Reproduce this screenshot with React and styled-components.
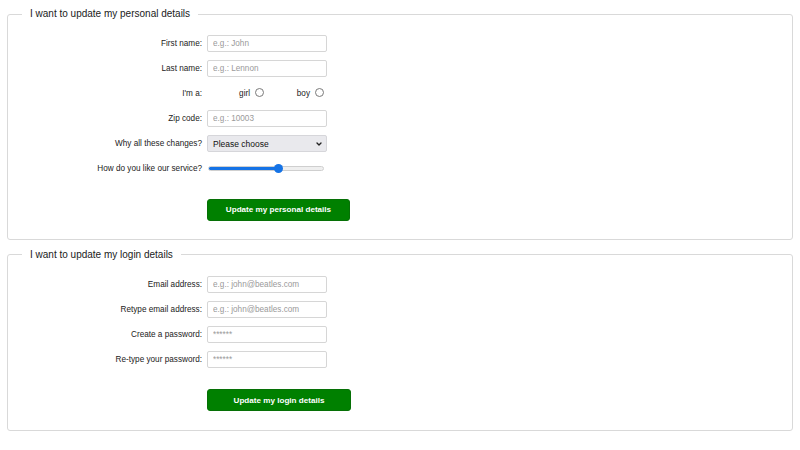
import React from 'react';
import styled, {createGlobalStyle} from "styled-components";
import {ChevronDown} from "lucide-react";

const GlobalStyle = createGlobalStyle`
  * {
    box-sizing: border-box;
  }

  body {
    margin: 0;
    padding: 8px 7px;
    background: #fff;
    font-family: "Liberation Sans", Arial, sans-serif;
    color: #222;
  }
`

const Fieldset = styled.fieldset`
  margin: 0 0 9px;
  padding: 15px 14px ${props => props.bottom}px;
  border: 1px solid #d9d9d9;
  border-radius: 3px;
  min-width: 0;
`

const Legend = styled.legend`
  padding: 0 8px;
  font-size: 10px;
  line-height: 12px;
  color: #1a1a1a;
`

const Row = styled.div`
  display: flex;
  align-items: center;
  height: 17px;
  margin-bottom: 8px;
`

const Label = styled.label`
  width: 185px;
  flex: none;
  padding-right: 5px;
  text-align: right;
  font-size: 8.2px;
  color: #222;
`

const TextInput = styled.input`
  width: 120px;
  height: 17px;
  padding: 0 5px;
  border: 1px solid #d6d6d6;
  border-radius: 2px;
  font-family: inherit;
  font-size: 8.2px;
  color: #222;
  outline: none;

  &::placeholder {
    color: #9a9a9a;
  }
`

const Options = styled.div`
  display: flex;
  width: 120px;
`

const Option = styled.label`
  width: 60px;
  display: flex;
  align-items: center;
  justify-content: flex-end;
  font-size: 8.2px;
  color: #222;

  > input {
    -webkit-appearance: none;
    appearance: none;
    width: 9px;
    height: 9px;
    margin: 0 3px 2px 5px;
    border: 1px solid #7a7a7a;
    border-radius: 50%;
    background: #fff;
  }
`

const SelectBox = styled.div`
  position: relative;
  width: 120px;
  height: 17px;

  > svg {
    position: absolute;
    right: 4px;
    top: 5px;
    pointer-events: none;
    color: #222;
  }
`

const Select = styled.select`
  -webkit-appearance: none;
  appearance: none;
  display: block;
  width: 100%;
  height: 100%;
  padding: 0 5px;
  font-family: inherit;
  font-size: 8.5px;
  color: #111;
  background: #e9e9ed;
  border: 1px solid #d6d6da;
  border-radius: 2px;
  outline: none;
`

const Range = styled.input`
  -webkit-appearance: none;
  appearance: none;
  width: 116px;
  height: 5px;
  margin: 0 0 0 1px;
  border: 1px solid #cfcfcf;
  border-radius: 3px;
  background: linear-gradient(to right, #1573e6 0%, #1573e6 62%, #efefef 62%, #efefef 100%);

  &::-webkit-slider-thumb {
    -webkit-appearance: none;
    width: 9px;
    height: 9px;
    border-radius: 50%;
    background: #1573e6;
    border: none;
  }
`

const Actions = styled.div`
  padding: ${props => props.gap}px 0 0 185px;
`

const Button = styled.button`
  width: ${props => props.width}px;
  height: 22px;
  border: 1px solid #067006;
  border-radius: 3px;
  background: #008000;
  color: #fff;
  font-family: inherit;
  font-size: 8.1px;
  font-weight: bold;
  cursor: pointer;
`

const App = () => {
    return (
        <>
            <GlobalStyle/>
            <form>
                <Fieldset bottom={18}>
                    <Legend>I want to update my personal details</Legend>
                    <Row>
                        <Label>First name:</Label>
                        <TextInput placeholder="e.g.: John"/>
                    </Row>
                    <Row>
                        <Label>Last name:</Label>
                        <TextInput placeholder="e.g.: Lennon"/>
                    </Row>
                    <Row>
                        <Label>I'm a:</Label>
                        <Options>
                            <Option>girl <input type="radio" name="gender"/></Option>
                            <Option>boy <input type="radio" name="gender"/></Option>
                        </Options>
                    </Row>
                    <Row>
                        <Label>Zip code:</Label>
                        <TextInput placeholder="e.g.: 10003"/>
                    </Row>
                    <Row>
                        <Label>Why all these changes?</Label>
                        <SelectBox>
                            <Select defaultValue="">
                                <option value="">Please choose</option>
                                <option value="moved">I moved</option>
                                <option value="other">Other</option>
                            </Select>
                            <ChevronDown size={8} strokeWidth={4}/>
                        </SelectBox>
                    </Row>
                    <Row>
                        <Label>How do you like our service?</Label>
                        <Range type="range" min="0" max="100" defaultValue="62"/>
                    </Row>
                    <Actions gap={13}>
                        <Button type="button" width={143}>Update my personal details</Button>
                    </Actions>
                </Fieldset>
                <Fieldset bottom={19}>
                    <Legend>I want to update my login details</Legend>
                    <Row>
                        <Label>Email address:</Label>
                        <TextInput placeholder="e.g.: john@beatles.com"/>
                    </Row>
                    <Row>
                        <Label>Retype email address:</Label>
                        <TextInput placeholder="e.g.: john@beatles.com"/>
                    </Row>
                    <Row>
                        <Label>Create a password:</Label>
                        <TextInput type="password" placeholder="******"/>
                    </Row>
                    <Row>
                        <Label>Re-type your password:</Label>
                        <TextInput type="password" placeholder="******"/>
                    </Row>
                    <Actions gap={13}>
                        <Button type="button" width={144}>Update my login details</Button>
                    </Actions>
                </Fieldset>
            </form>
        </>
    );
};

export default App;
